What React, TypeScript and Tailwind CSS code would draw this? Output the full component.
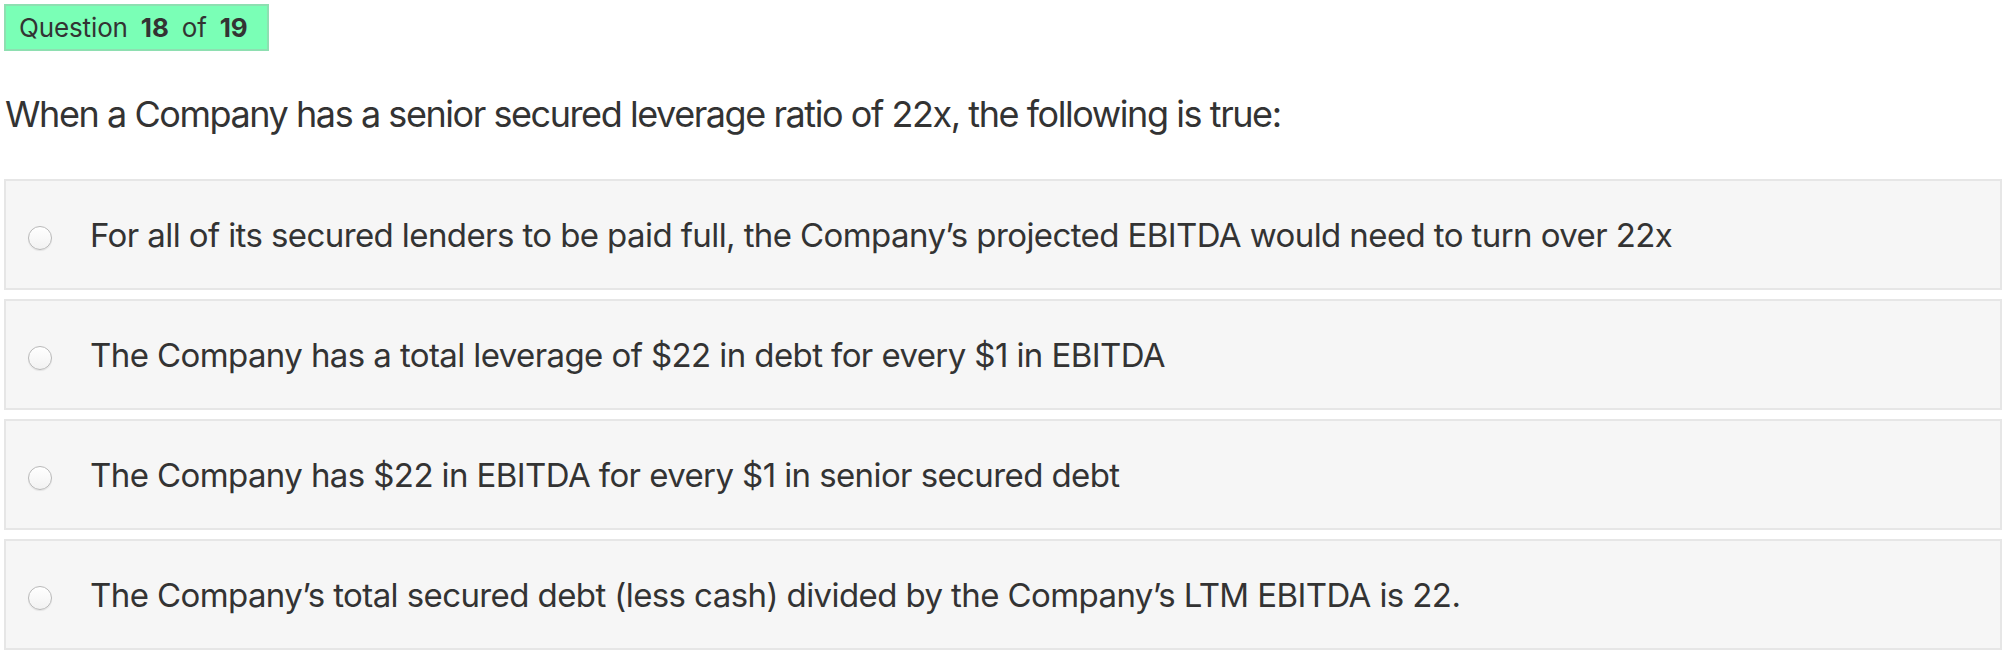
import { useState } from 'react'

const options = [
  'For all of its secured lenders to be paid full, the Company\u2019s projected EBITDA would need to turn over 22x',
  'The Company has a total leverage of $22 in debt for every $1 in EBITDA',
  'The Company has $22 in EBITDA for every $1 in senior secured debt',
  'The Company\u2019s total secured debt (less cash) divided by the Company\u2019s LTM EBITDA is 22.',
]

export default function App() {
  const [selected, setSelected] = useState<number | null>(null)

  return (
    <div className="min-h-[664px] bg-white pl-[4px] pr-[8px] pt-[4px] font-['Inter',sans-serif] text-[#333333]">
      {/* Progress badge */}
      <div className="flex h-[47px] w-[265px] items-center gap-[13px] border-2 border-[#8edfb1] bg-[#7affb6] pl-[13px] text-[26px] tracking-[-0.005em]">
        <span>Question</span>
        <span className="font-bold">18</span>
        <span>of</span>
        <span className="font-bold">19</span>
      </div>

      <h1 className="mt-[39px] pl-[1px] text-[36px] leading-[48px] tracking-[-0.04em]">
        When a Company has a senior secured leverage ratio of 22x, the following is true:
      </h1>

      <div className="mt-[41px] flex flex-col gap-[9px]">
        {options.map((text, i) => (
          <label
            key={i}
            onClick={() => setSelected(i)}
            className="flex h-[111px] cursor-pointer items-center border-2 border-[#e6e6e6] bg-[#f6f6f6]"
          >
            <span className="ml-[22px] mt-[7px] flex h-[24px] w-[24px] shrink-0 items-center justify-center rounded-full border border-[#b9b9b9] bg-gradient-to-b from-white to-[#f2f2f2] shadow-[0_1px_1px_rgba(0,0,0,0.08)]">
              {selected === i && <span className="h-[10px] w-[10px] rounded-full bg-[#333]" />}
            </span>
            <span className="ml-[38px] text-[33px] leading-[40px] tracking-[-0.018em]">{text}</span>
          </label>
        ))}
      </div>
    </div>
  )
}
